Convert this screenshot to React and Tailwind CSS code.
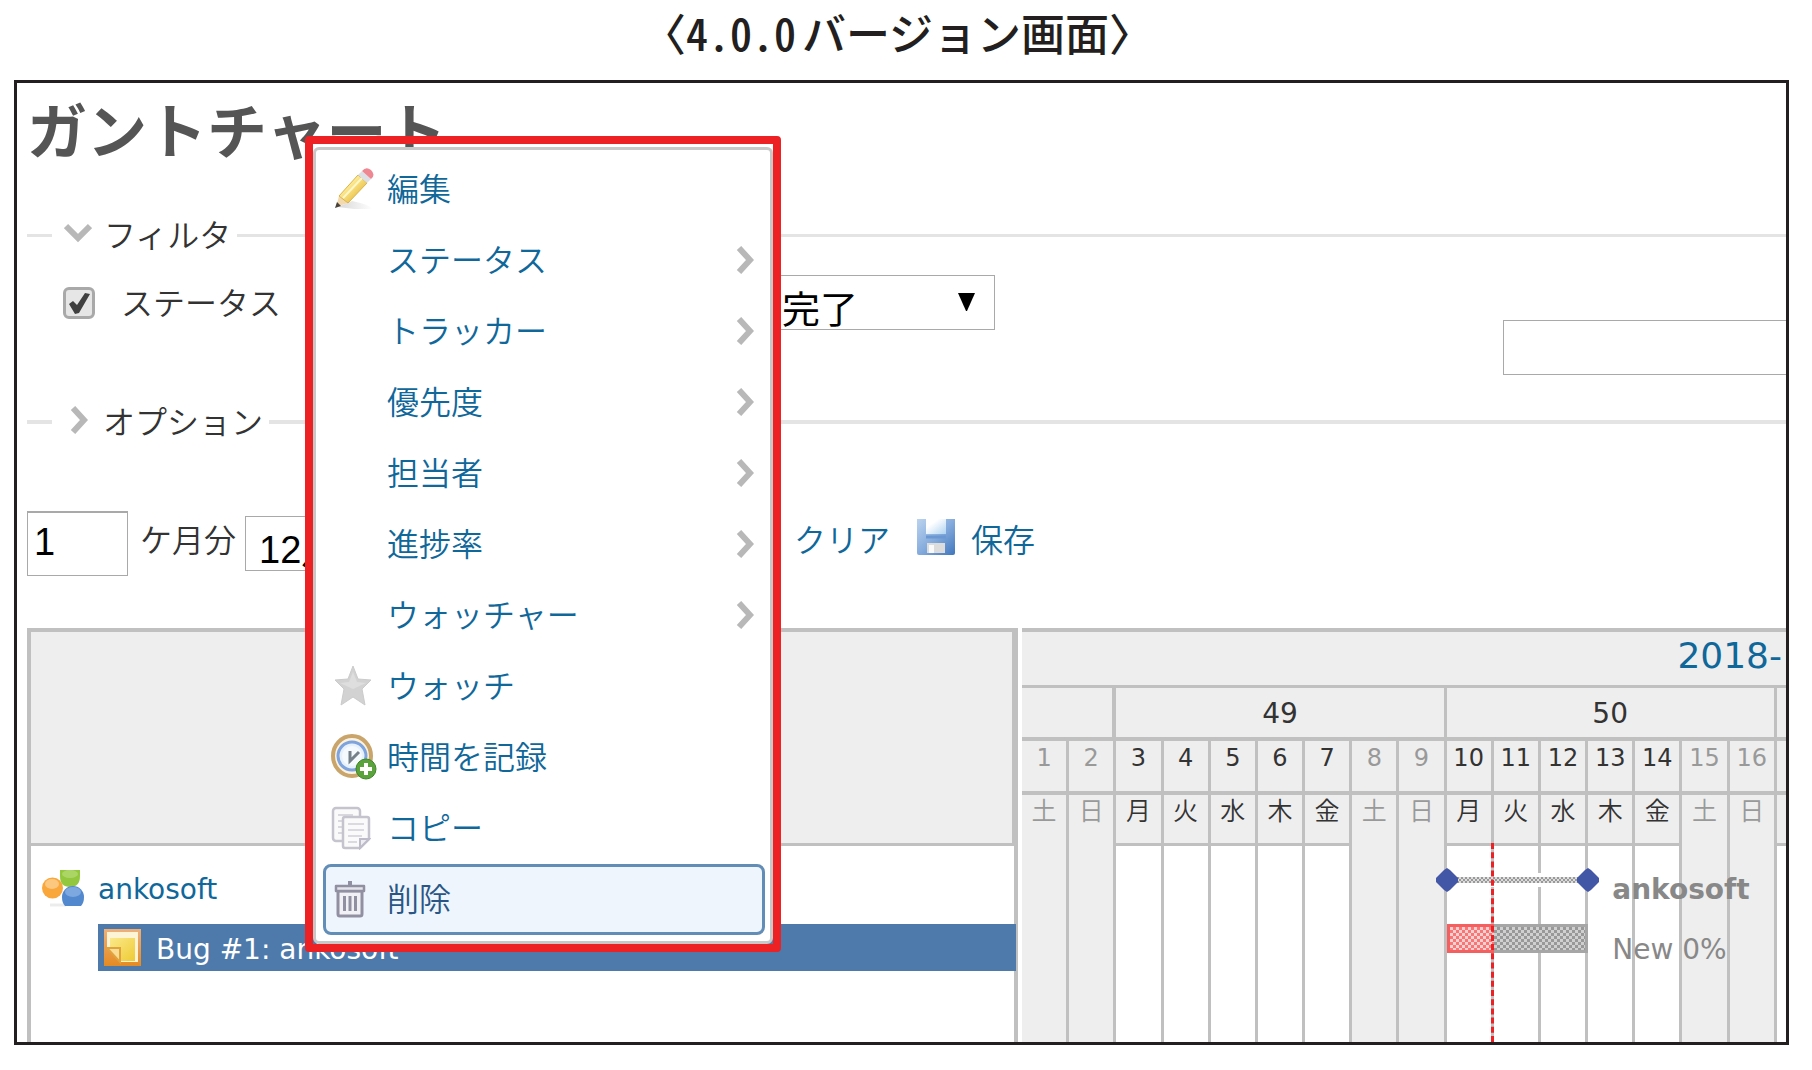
import React from 'react';
import clsx from 'clsx';

const WEEKDAYS = ['土', '日', '月', '火', '水', '木', '金'];

const days = Array.from({ length: 16 }, (_, i) => ({
  date: i + 1,
  name: WEEKDAYS[i % 7],
  weekend: i % 7 < 2,
}));

const menuItems = [
  { label: '編集', icon: PencilIcon },
  { label: 'ステータス', submenu: true },
  { label: 'トラッカー', submenu: true },
  { label: '優先度', submenu: true },
  { label: '担当者', submenu: true },
  { label: '進捗率', submenu: true },
  { label: 'ウォッチャー', submenu: true },
  { label: 'ウォッチ', icon: StarIcon },
  { label: '時間を記録', icon: ClockIcon },
  { label: 'コピー', icon: CopyIcon },
  { label: '削除', icon: TrashIcon, active: true },
];

function PencilIcon() {
  return (
    <svg width="44" height="42" viewBox="-2 0 42 42">
      <defs>
        <linearGradient id="pencil" x1="0" y1="0" x2="1" y2="1">
          <stop offset="0.3" stopColor="#fff0a0" />
          <stop offset="0.7" stopColor="#ecc650" />
        </linearGradient>
        <linearGradient id="pencil-shadow" x1="0" y1="0" x2="1" y2="0">
          <stop offset="0" stopColor="#d8d8d8" />
          <stop offset="1" stopColor="#fff" />
        </linearGradient>
      </defs>
      <path d="M4 39 L18 33 Q34 36 39 41 H20 Z" fill="url(#pencil-shadow)" />
      <path d="M2 39 L5 28 L14 35 Z" fill="#f3d9ae" />
      <path d="M1 40 L3 34 L7 38 Z" fill="#4a4238" />
      <path d="M5 28 L24 7 L33 15 L14 35 Z" fill="url(#pencil)" stroke="#dcb24a" />
      <path d="M9 30 L28 10" stroke="#fff7c9" strokeWidth="2" />
      <path d="M24 7 L28 3 L37 11 L33 15 Z" fill="#dcdfe6" />
      <path d="M28 3 Q32 -2 37 2 Q42 7 37 11 Z" fill="#ee8791" />
    </svg>
  );
}

function StarIcon() {
  return (
    <svg width="42" height="42" viewBox="-2 0 42 42">
      <path
        d="M20 1 L25 14 L38 15 L29 24 L32 40 L20 32 L8 40 L11 24 L2 15 L15 14 Z"
        fill="#d2d2d2"
        stroke="#cbcbcb"
        strokeLinejoin="round"
      />
      <path d="M20 7 L24 17 L33 18 L20 24 L7 18 L16 17 Z" fill="#dedede" />
    </svg>
  );
}

function ClockIcon() {
  return (
    <svg width="46" height="46" viewBox="0 0 46 46">
      <ellipse cx="21" cy="22" rx="19" ry="20" fill="#fbf3df" stroke="#c9a56b" strokeWidth="4" />
      <circle cx="21" cy="22" r="14" fill="#e6f1fc" stroke="#7ea3dd" strokeWidth="3" />
      <circle cx="21" cy="22" r="10" fill="#f5faff" />
      <path d="M19 17 V27 L28 18" fill="none" stroke="#75808a" strokeWidth="3" />
      <circle cx="35" cy="35" r="10" fill="#5aa23b" stroke="#3f8628" />
      <path d="M35 29 V41 M29 35 H41" stroke="#fff" strokeWidth="4" />
    </svg>
  );
}

function CopyIcon() {
  return (
    <svg width="40" height="44" viewBox="0 0 40 44">
      <rect x="2" y="2" width="27" height="33" rx="3" fill="#fafafa" stroke="#c5c4ce" strokeWidth="2.500" />
      <path d="M7 9 H22 M7 15 H12 M7 21 H12 M7 27 H12" stroke="#d8d8de" strokeWidth="2" />
      <path
        d="M14 11 H36 Q38 11 38 13 V33 L29 42 H14 Q12 42 12 40 V13 Q12 11 14 11 Z"
        fill="#fafafa"
        stroke="#c5c4ce"
        strokeWidth="2.500"
      />
      <path d="M17 18 H33 M17 24 H33 M17 30 H31 M17 36 H26" stroke="#dadae0" strokeWidth="2" />
      <path d="M29 42 V33 H38 Z" fill="#ededf2" stroke="#bdbcc8" strokeWidth="2" />
    </svg>
  );
}

function TrashIcon() {
  return (
    <svg width="36" height="38" viewBox="-2 0 36 38">
      <path d="M5 11 H29 V34 Q29 36 27 36 H7 Q5 36 5 34 Z" fill="#f1f1f5" stroke="#9190a2" strokeWidth="3" />
      <path d="M17 1 V5" stroke="#9190a2" strokeWidth="4" />
      <path d="M3 11 V6 H31 V11 Z" fill="#e4e4ea" stroke="#9190a2" strokeWidth="2.500" strokeLinejoin="round" />
      <path d="M11.500 16 V31 M17 16 V31 M22.500 16 V31" stroke="#9190a2" strokeWidth="3" />
    </svg>
  );
}

function SaveIcon() {
  return (
    <svg width="40" height="37" viewBox="0 0 40 37">
      <defs>
        <linearGradient id="disk" x1="0" y1="0" x2="1" y2="1">
          <stop offset="0" stopColor="#bcd3ee" />
          <stop offset="0.5" stopColor="#86acdd" />
          <stop offset="1" stopColor="#4076bd" />
        </linearGradient>
        <linearGradient id="disk-label" x1="0" y1="0" x2="1" y2="1">
          <stop offset="0.3" stopColor="#fff" />
          <stop offset="1" stopColor="#aed4f0" />
        </linearGradient>
      </defs>
      <path d="M1 0 H39 V34 Q39 36 37 36 H3 Q1 36 1 34 Z" fill="url(#disk)" />
      <path d="M10 0 H30 V15 H10 Z" fill="url(#disk-label)" />
      <path d="M10 18 H30" stroke="#6b98d2" strokeWidth="3" />
      <path d="M11 24 H29 V34 H11 Z" fill="#dcdcdc" />
      <path d="M13 26 H18 V34 H13 Z" fill="#fafafa" />
    </svg>
  );
}

function ProjectIcon() {
  return (
    <svg width="42" height="37" viewBox="0 0 42 37">
      <circle cx="10.500" cy="18" r="10.500" fill="#f9a63a" />
      <ellipse cx="10" cy="14" rx="7" ry="5" fill="#fcc880" />
      <path d="M18 0 H38 V6 Q38 17 28 17 Q18 17 18 6 Z" fill="#93c83e" />
      <ellipse cx="28" cy="4" rx="8" ry="4" fill="#abd665" />
      <path d="M8 35 H24" stroke="#ececec" strokeWidth="3" />
      <path d="M23 36 Q20 33 20 27 A11 11 0 0 1 42 27 Q42 33 39 36 Z" fill="#5288cd" />
      <ellipse cx="31" cy="22" rx="8" ry="5" fill="#7ca8df" />
    </svg>
  );
}

function NoteIcon() {
  return (
    <svg width="37" height="37" viewBox="0 0 37 37">
      <defs>
        <linearGradient id="note" x1="0" y1="0" x2="0" y2="1">
          <stop offset="0" stopColor="#eeb07a" />
          <stop offset="1" stopColor="#e58a22" />
        </linearGradient>
        <linearGradient id="note-face" x1="0" y1="0" x2="1" y2="1">
          <stop offset="0" stopColor="#fbe98a" />
          <stop offset="1" stopColor="#eecb35" />
        </linearGradient>
      </defs>
      <rect width="37" height="37" fill="url(#note)" />
      <path d="M3 3 H34 V33 H16 L3 20 Z" fill="#fdf4d6" />
      <path d="M6 9 H31 V32 H17 V19 H6 Z" fill="url(#note-face)" />
      <path d="M3 19 H16 V33 Z" fill="#fbdc94" stroke="#e0a23c" strokeWidth="2" />
    </svg>
  );
}

function Chevron({ down }) {
  return (
    <svg width={down ? 28 : 18} height={down ? 20 : 28} viewBox={down ? '0 0 28 20' : '0 0 18 28'}>
      <path
        d={down ? 'M2 3 L14 15 L26 3' : 'M3 2 L14 14 L3 26'}
        fill="none"
        stroke="#b8b8b8"
        strokeWidth="6"
      />
    </svg>
  );
}

function Diamond({ className }) {
  return (
    <svg className={clsx('absolute -top-[5px]', className)} width="24" height="24" viewBox="0 0 24 24">
      <path d="M12 0 L15 2 L23 10 V14 L15 22 L12 24 L9 22 L1 14 V10 L9 2 Z" fill="#4357a7" />
    </svg>
  );
}

function ContextMenu() {
  return (
    <div className="absolute left-[288px] top-[53px] w-[476px] rounded border-8 border-[#ed2024] pt-[3px]">
      <ul className="rounded-md border-[3px] border-[#c8c8c8] bg-white pt-1 pr-[5px] pb-[6px] pl-[7px]">
        {menuItems.map(({ label, icon: Icon, submenu, active }) => (
          <li key={label}>
            <a
              href="#"
              className={clsx(
                'flex h-[71px] items-center rounded-lg border-[3px] pr-2 pb-[2px] pl-[5px]',
                active ? 'border-[#628db6] bg-[#eef5fc] text-[#2a5685]' : 'border-transparent',
              )}
            >
              <span className="flex w-[56px] items-center">{Icon && <Icon />}</span>
              <span className="flex-1 pb-1">{label}</span>
              {submenu && <Chevron />}
            </a>
          </li>
        ))}
      </ul>
    </div>
  );
}

function Filters() {
  return (
    <fieldset className="mt-[38px] border-t-[3px] border-[#e4e4e4]">
      <legend className="ml-[25px] flex h-10 items-center gap-3 pr-[6px] pb-1 pl-3">
        <Chevron down />
        フィルタ
      </legend>
      <div className="mt-5 flex items-start pl-9">
        <div className="flex h-[55px] w-[667px] items-center gap-[26px]">
          <span className="relative flex">
            <input
              id="status"
              type="checkbox"
              defaultChecked
              className="size-8 appearance-none rounded-md border-[3px] border-[#a9a9a9] bg-[#e6e6e6]"
            />
            <svg className="pointer-events-none absolute inset-0" width="32" height="32" viewBox="0 0 32 32">
              <path d="M6 17 L10 14 L14 18 L22 6 L27 7 L16 26 L12 27 Z" fill="#404040" />
            </svg>
          </span>
          <label htmlFor="status" className="pb-1">
            ステータス
          </label>
        </div>
        <div className="relative">
          <select
            aria-label="ステータス"
            className="h-[55px] w-[265px] appearance-none border border-[#a9a9a9] bg-white pt-2 pl-[13px] text-[38px] leading-[45px] font-normal text-black"
          >
            <option>未完了</option>
          </select>
          <svg className="pointer-events-none absolute top-[18px] right-5" width="17" height="18" viewBox="0 0 17 18">
            <path d="M0 0 H17 L9 18 H8 Z" fill="#000" />
          </svg>
        </div>
        <input
          type="text"
          aria-label="値"
          className="mt-[45px] ml-auto h-[55px] w-[283px] border border-r-0 border-[#a9a9a9]"
        />
      </div>
    </fieldset>
  );
}

function Toolbar() {
  return (
    <div className="mt-[69px] flex h-[65px] items-center">
      <input
        id="months"
        type="text"
        defaultValue="1"
        className="h-[65px] w-[101px] border border-t-2 border-[#a9a9a9] pb-1 pl-[6px] font-['Liberation_Sans','Noto_Sans_CJK_JP',sans-serif] text-[38px] font-normal text-black"
      />
      <label htmlFor="months" className="ml-3 pb-3">
        ケ月分
      </label>
      <select
        aria-label="月"
        className="ml-[9px] h-[55px] w-[140px] appearance-none border border-[#a9a9a9] bg-white pt-3 pl-[13px] font-['Liberation_Sans','Noto_Sans_CJK_JP',sans-serif] text-[38px] leading-[42px] font-normal text-black"
      >
        <option>12月</option>
      </select>
      <div className="ml-[409px] flex items-center pb-3 text-[#0f679a]">
        <a href="#">クリア</a>
        <a href="#" className="ml-[26px] flex items-center gap-[15px]">
          <SaveIcon />
          保存
        </a>
      </div>
    </div>
  );
}

function Subjects() {
  return (
    <div className="border-t-4 border-l-4 border-[#c0c0c0]">
      <div className="h-[214px] border-r-[6px] border-b-[3px] border-[#c0c0c0] bg-[#eee]" />
      <div className="h-[196px] border-r-4 border-[#c0c0c0] pt-3 font-['DejaVu_Sans',sans-serif] text-[28px] font-normal">
        <div className="flex h-[60px] items-center gap-[14px] pl-[11px] text-[#0f679a]">
          <ProjectIcon />
          <a href="#" className="pt-1">
            ankosoft
          </a>
        </div>
        <div className="mt-[6px] -mr-[2px] ml-[67px] flex h-[47px] items-center gap-[15px] bg-[#4e7aab] pl-[6px] text-white">
          <NoteIcon />
          <a href="#" className="pt-1">
            Bug #1: ankosoft
          </a>
        </div>
      </div>
    </div>
  );
}

function Chart() {
  return (
    <div className="relative font-normal">
      <table className="w-full table-fixed border-separate border-spacing-0 font-['DejaVu_Sans','Noto_Sans_CJK_JP',sans-serif]">
        <colgroup>
          {days.map((day) => (
            <col key={day.date} />
          ))}
          <col className="w-[9px]" />
        </colgroup>
        <thead className="bg-[#eee]">
          <tr className="h-[60px]">
            <th
              colSpan={17}
              className="border-t-4 border-b-[3px] border-[#c0c0c0] p-0 pr-1 pb-[6px] text-right text-[36px] leading-[46px] font-normal"
            >
              <a href="#" className="text-[#0f679a]">
                2018-
              </a>
            </th>
          </tr>
          <tr className="h-[53px] text-[28px]">
            <th colSpan={2} className="border-r-4 border-b-4 border-[#c0c0c0] p-0" />
            <th colSpan={7} className="border-r-[3px] border-b-4 border-[#c0c0c0] p-0 pt-[2px] font-normal">
              49
            </th>
            <th colSpan={7} className="border-r-[3px] border-b-4 border-[#c0c0c0] p-0 pt-[2px] font-normal">
              50
            </th>
            <th className="border-b-4 border-[#c0c0c0] p-0" />
          </tr>
          <tr className="h-[54px] text-[24px]">
            {days.map((day) => (
              <th
                key={day.date}
                className={clsx(
                  'border-r-[3px] border-b-4 border-[#c0c0c0] p-0 align-top leading-[34px] font-normal',
                  day.weekend && 'text-[#999]',
                )}
              >
                {day.date}
              </th>
            ))}
            <th className="border-b-4 border-[#c0c0c0] p-0" />
          </tr>
          <tr className="h-[51px] font-['Noto_Sans_CJK_JP',sans-serif] text-[25px]">
            {days.map((day) => (
              <th
                key={day.date}
                className={clsx(
                  'border-r-[3px] border-[#c0c0c0] p-0 align-top leading-[28px] font-[350]',
                  day.weekend ? 'text-[#999]' : 'border-b-[3px]',
                )}
              >
                {day.name}
              </th>
            ))}
            <th className="border-b-[3px] border-[#c0c0c0] p-0" />
          </tr>
        </thead>
        <tbody>
          <tr className="h-[196px]">
            {days.map((day) => (
              <td
                key={day.date}
                className={clsx('border-r-[3px] border-[#c0c0c0]', day.weekend && 'bg-[#eee]')}
              />
            ))}
            <td />
          </tr>
        </tbody>
      </table>

      {/* bars share the day columns of the table */}
      <div className="absolute inset-x-0 top-[215px] bottom-0 font-['DejaVu_Sans',sans-serif] text-[28px] text-[#888]">
        <div className="grid h-[75px] grid-cols-[repeat(16,minmax(0,1fr))_9px] items-start pt-[30px]">
          <div className="relative col-span-3 col-start-10 h-[14px] border-y-4 border-white bg-[repeating-conic-gradient(#999_0_25%,#ddd_0_50%)] bg-[length:4px_4px]">
            <Diamond className="-left-[12px] -mt-1" />
            <Diamond className="-right-[12px] -mt-1" />
          </div>
          <span className="col-span-5 col-start-13 pl-[24px] leading-[34px] font-bold">ankosoft</span>
        </div>
        <div className="grid grid-cols-[repeat(16,minmax(0,1fr))_9px] items-start pt-[6px]">
          <div className="col-start-10 h-[29px] border-[3px] border-r-0 border-[#f4605f] bg-[repeating-conic-gradient(#f77776_0_25%,#fcd0d0_0_50%)] bg-[length:6px_6px]" />
          <div className="col-span-2 h-[29px] border-[3px] border-l-0 border-[#a6a6a6] bg-[repeating-conic-gradient(#999_0_25%,#d0d0d0_0_50%)] bg-[length:6px_6px]" />
          <span className="col-span-5 pt-[9px] pl-[24px] leading-[34px]">New 0%</span>
        </div>
        <div className="absolute inset-0 grid grid-cols-[repeat(16,minmax(0,1fr))_9px]">
          <div className="col-start-10 border-r-[3px] border-dashed border-[#ed2024]" />
        </div>
      </div>
    </div>
  );
}

export default function App() {
  return (
    <div className="bg-white pr-[23px] pl-[14px] font-['Noto_Sans_CJK_JP',sans-serif] text-[32px] leading-10 font-[350] text-[#333]">
      <h2 className="flex h-20 items-center justify-center gap-[6px] pr-2 pb-4 text-[44px] font-medium text-[#231f20] [font-feature-settings:'hwid','halt']">
        <span>〈4.0.0</span>
        <span>バージョン画面〉</span>
      </h2>
      <div className="relative overflow-hidden border-[3px] border-[#231f20] pl-[10px]">
        <h1 className="h-[94px] text-[60px] leading-[90px] font-bold text-[#555]">ガントチャート</h1>
        <Filters />
        <fieldset className="mt-[27px] border-t-4 border-[#e4e4e4]">
          <legend className="ml-[25px] flex h-10 items-center gap-[15px] pr-[6px] pb-1 pl-[18px]">
            <Chevron />
            オプション
          </legend>
        </fieldset>
        <Toolbar />
        <div className="mt-[52px] grid grid-cols-[991fr_764fr] gap-1">
          <Subjects />
          <Chart />
        </div>
        <div className="text-[#0f679a]">
          <ContextMenu />
        </div>
      </div>
    </div>
  );
}
